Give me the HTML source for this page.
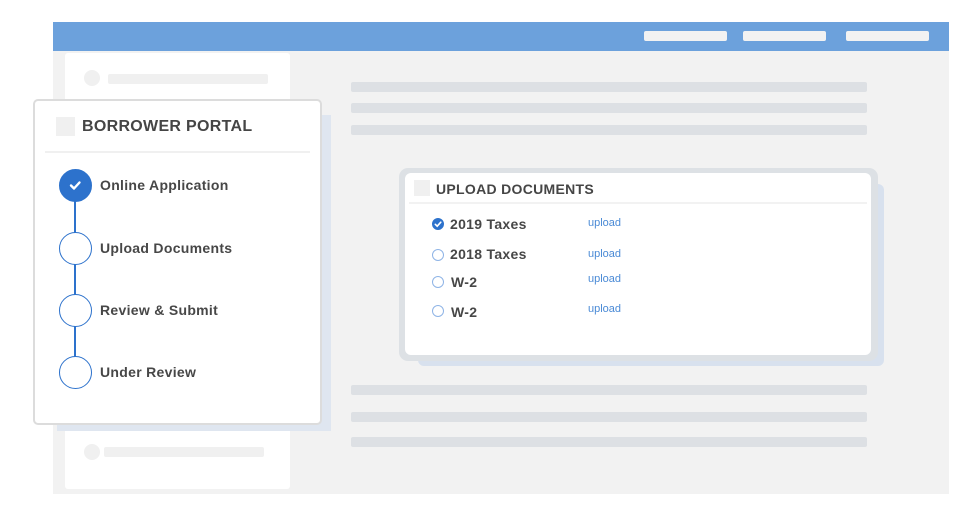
<!DOCTYPE html>
<html><head><style>
*{margin:0;padding:0;box-sizing:border-box}
body{width:980px;height:513px;background:#fff;position:relative;overflow:hidden;font-family:"Liberation Sans",sans-serif}
.a{position:absolute}
.ln{position:absolute;left:351px;width:516px;height:10px;background:#dde0e4;border-radius:2px}
.pill{position:absolute;top:31px;height:10px;width:83px;background:#f2f2f2;border-radius:2px}
.step{position:absolute;left:59px;width:33px;height:33px;border:1.5px solid #2d72cc;border-radius:50%;background:#fff}
.st{position:absolute;left:100px;font-size:14px;font-weight:bold;color:#474747;letter-spacing:0.3px}
.cb{position:absolute;left:432px;width:12px;height:12px;border:1px solid #8fb4e6;border-radius:50%;background:#fff}
.it{position:absolute;left:450px;font-size:14px;font-weight:bold;color:#474747;letter-spacing:0.3px}
.up{position:absolute;left:588px;font-size:11px;color:#4a8ad6}
</style></head><body>
<div class="a" style="left:53px;top:22px;width:896px;height:472px;background:#f2f2f2"></div>
<div class="a" style="left:53px;top:22px;width:896px;height:29px;background:#6ca1dc"></div>
<div class="pill" style="left:644px"></div>
<div class="pill" style="left:743px"></div>
<div class="pill" style="left:846px"></div>
<div class="a" style="left:65px;top:53px;width:225px;height:436px;background:#fff;border-radius:3px"></div>
<div class="a" style="left:84px;top:70px;width:16px;height:16px;border-radius:50%;background:#f0f0f0"></div>
<div class="a" style="left:108px;top:74px;width:160px;height:10px;border-radius:2px;background:#f0f0f0"></div>
<div class="a" style="left:84px;top:444px;width:16px;height:16px;border-radius:50%;background:#f0f0f0"></div>
<div class="a" style="left:104px;top:447px;width:160px;height:10px;border-radius:2px;background:#f0f0f0"></div>
<div class="ln" style="top:82px"></div><div class="ln" style="top:103px"></div><div class="ln" style="top:125px"></div>
<div class="ln" style="top:385px"></div><div class="ln" style="top:412px"></div><div class="ln" style="top:437px"></div>

<div class="a" style="left:57px;top:115px;width:274px;height:316px;background:#dfe6f0"></div>
<div class="a" style="left:33px;top:99px;width:289px;height:326px;background:#fff;border:2px solid #dcdcdc;border-radius:5px"></div>
<div class="a" style="left:56px;top:117px;width:19px;height:19px;background:#f0f0f0"></div>
<div class="a" style="left:82px;top:118px;font-size:16px;font-weight:bold;color:#454545;letter-spacing:0.3px">BORROWER PORTAL</div>
<div class="a" style="left:45px;top:151px;width:265px;height:2px;background:#f0f0f0"></div>
<div class="a" style="left:74px;top:190px;width:2px;height:180px;background:#2d72cc"></div>
<div class="step" style="top:169px;background:#2d72cc"><svg width="30" height="30" viewBox="0 0 30 30" style="position:absolute;left:0;top:0"><path d="M11 15.5l3 3 5.5-6" stroke="#fff" stroke-width="2.4" fill="none" stroke-linecap="round" stroke-linejoin="round"/></svg></div>
<div class="step" style="top:232px"></div>
<div class="step" style="top:294px"></div>
<div class="step" style="top:356px"></div>
<div class="st" style="top:177px">Online Application</div>
<div class="st" style="top:240px">Upload Documents</div>
<div class="st" style="top:302px">Review &amp; Submit</div>
<div class="st" style="top:364px">Under Review</div>

<div class="a" style="left:418px;top:184px;width:466px;height:182px;background:#d8e1ee;border-radius:6px"></div>
<div class="a" style="left:399px;top:168px;width:479px;height:193px;background:#dde1e5;border-radius:9px"></div>
<div class="a" style="left:405px;top:173px;width:466px;height:182px;background:#fff;border-radius:6px"></div>
<div class="a" style="left:414px;top:180px;width:16px;height:16px;background:#f0f0f0"></div>
<div class="a" style="left:436px;top:181px;font-size:14px;font-weight:bold;color:#454545;letter-spacing:0.3px">UPLOAD DOCUMENTS</div>
<div class="a" style="left:409px;top:202px;width:458px;height:2px;background:#f2f2f2"></div>
<div class="cb" style="top:218px;background:#2d72cc;border-color:#2d72cc"><svg width="12" height="12" viewBox="0 0 12 12" style="position:absolute;left:-1px;top:-1px"><path d="M3.3 6.3l1.9 1.9 3.6-4" stroke="#fff" stroke-width="1.6" fill="none" stroke-linecap="round"/></svg></div>
<div class="cb" style="top:249px"></div>
<div class="cb" style="top:276px"></div>
<div class="cb" style="top:305px"></div>
<div class="it" style="top:216px">2019 Taxes</div>
<div class="it" style="top:246px">2018 Taxes</div>
<div class="it" style="top:274px;left:451px">W-2</div>
<div class="it" style="top:304px;left:451px">W-2</div>
<div class="up" style="top:217px">upload</div>
<div class="up" style="top:248px">upload</div>
<div class="up" style="top:273px">upload</div>
<div class="up" style="top:303px">upload</div>
</body></html>
